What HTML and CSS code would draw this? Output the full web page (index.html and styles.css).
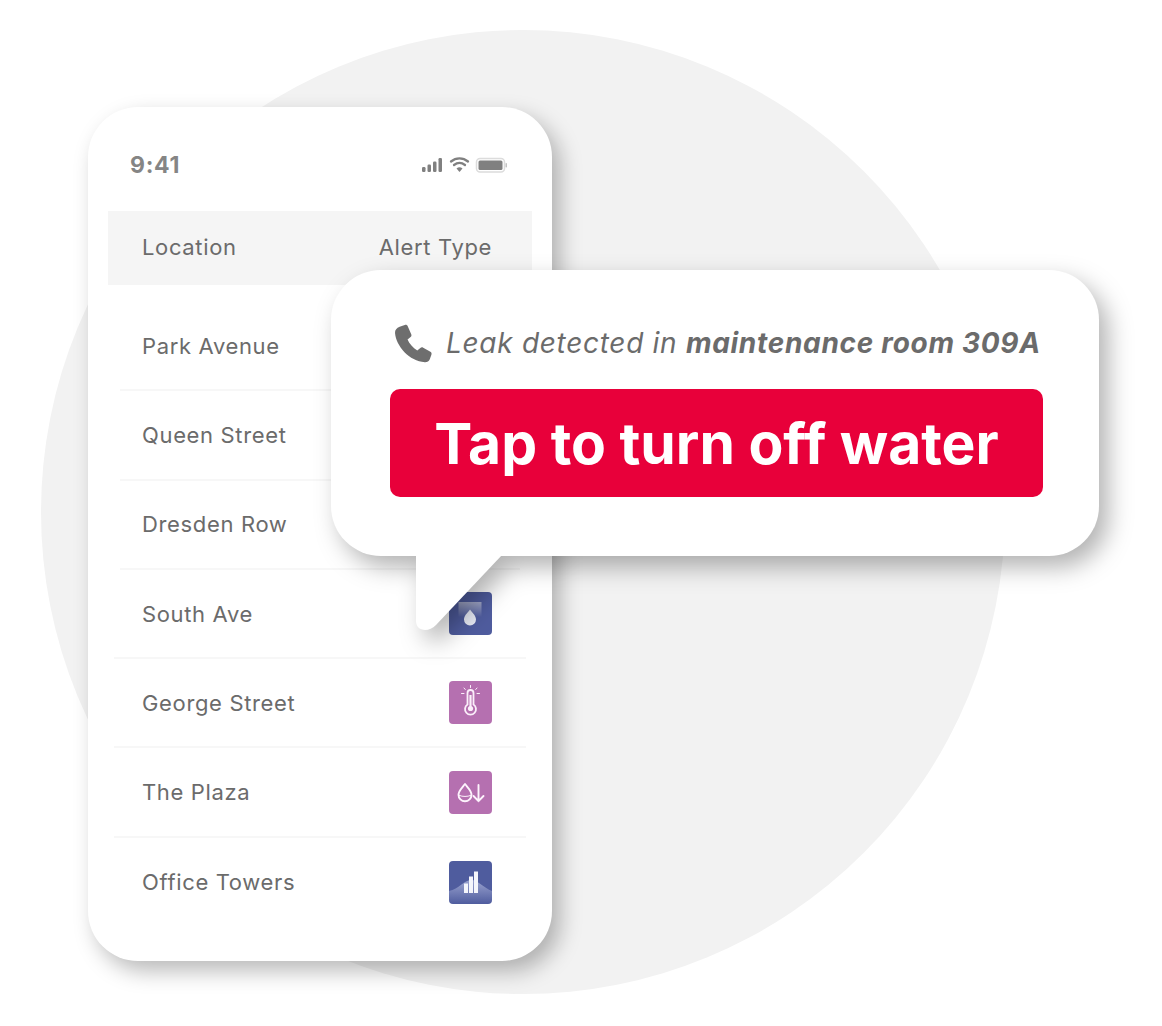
FILE: index.html
```html
<!DOCTYPE html>
<html lang="en">
<head>
    <meta charset="UTF-8">
    <meta name="viewport" content="width=device-width, initial-scale=1.0">
    <title>Leak alert</title>
    <link rel="stylesheet" href="styles.css">
</head>
<body>
    <div class="stage">
        <div class="backdrop"></div>

        <div class="phone">
            <div class="status-bar">
                <span class="time">9:41</span>
                <svg class="status-icons" width="88" height="20" viewBox="0 0 88 20">
                    <rect x="2" y="12" width="3.500" height="5" rx="1.200" fill="#808080"/>
                    <rect x="7.500" y="9.500" width="3.500" height="7.500" rx="1.200" fill="#808080"/>
                    <rect x="13" y="6.500" width="3.500" height="10.500" rx="1.200" fill="#808080"/>
                    <rect x="18.500" y="3" width="3.500" height="14" rx="1.200" fill="#808080"/>
                    <path d="M31 6.500c5-4.200 12-4.200 17 0M34 10c3.400-2.700 7.600-2.700 11 0" fill="none" stroke="#808080" stroke-width="2.300" stroke-linecap="round"/>
                    <path d="M36.500 13.500c2-1.600 4-1.600 6 0L39.500 17z" fill="#808080"/>
                    <rect x="56.500" y="3.500" width="28" height="13.500" rx="3.500" fill="none" stroke="#dcdcdc" stroke-width="1.500"/>
                    <rect x="58.500" y="5.500" width="24" height="9.500" rx="1.500" fill="#808080"/>
                    <rect x="85.500" y="8" width="1.500" height="4.500" rx=".7" fill="#c4c4c4"/>
                </svg>
            </div>

            <div class="table-head">
                <span>Location</span>
                <span>Alert Type</span>
            </div>

            <div class="row row-inset"><span>Park Avenue</span></div>
            <div class="row row-inset"><span>Queen Street</span></div>
            <div class="row row-inset"><span>Dresden Row</span></div>
            <div class="row">
                <span>South Ave</span>
                <div class="alert-icon alert-blue">
                    <svg width="43" height="43" viewBox="0 0 43 43">
                        <defs>
                            <linearGradient id="valve" x1="0" y1="0" x2="0" y2="1">
                                <stop offset="0" stop-color="#a3a9c9"/>
                                <stop offset="1" stop-color="#a3a9c9" stop-opacity="0"/>
                            </linearGradient>
                        </defs>
                        <rect x="9.500" y="10" width="23" height="15" fill="url(#valve)"/>
                        <path d="M21 17.500c3 3.800 6 6.500 6 10a6 6 0 0 1-12 0c0-3.500 3-6.200 6-10z" fill="#e6e9f4"/>
                    </svg>
                </div>
            </div>
            <div class="row">
                <span>George Street</span>
                <div class="alert-icon alert-purple">
                    <svg width="43" height="43" viewBox="0 0 43 43" fill="none" stroke="#fbeffa">
                        <path d="M18.500 12a3 3 0 0 1 6 0v11.500a5.500 5.500 0 1 1-6 0z" stroke-width="1.800"/>
                        <circle cx="21.500" cy="27.500" r="2.600" fill="#fbeffa" stroke="none"/>
                        <path d="M21.500 14v12" stroke-width="2.200"/>
                        <path d="M21.500 4.500v2M15 7l1.300 1.500M28 7l-1.300 1.500M12.500 12.500h2.500M28 12.500h2.500" stroke-width="1" stroke-linecap="round"/>
                    </svg>
                </div>
            </div>
            <div class="row">
                <span>The Plaza</span>
                <div class="alert-icon alert-purple">
                    <svg width="43" height="43" viewBox="0 0 43 43" fill="none" stroke="#fdf3fc" stroke-width="1.900" stroke-linecap="round" stroke-linejoin="round">
                        <path d="M16 13c2.800 3.700 6.500 6.800 6.500 10.800a6.500 6.500 0 0 1-13 0c0-4 3.700-7.100 6.500-10.800z"/>
                        <path d="M10.500 24.500c3 1.300 8 1.300 11 0" stroke-width="1"/>
                        <path d="M29.500 14v16M24.500 25l5 5.200 5-5.200"/>
                    </svg>
                </div>
            </div>
            <div class="row">
                <span>Office Towers</span>
                <div class="alert-icon alert-blue">
                    <svg width="43" height="43" viewBox="0 0 43 43">
                        <defs>
                            <linearGradient id="hill" x1="0" y1="0" x2="0" y2="1">
                                <stop offset="0" stop-color="#9aa3cf"/>
                                <stop offset="1" stop-color="#9aa3cf" stop-opacity="0"/>
                            </linearGradient>
                        </defs>
                        <path d="M0 30c10-2 15-11 22-11s13 8 21 11v13H0z" fill="url(#hill)"/>
                        <rect x="15" y="22.500" width="4" height="9.500" fill="#f4f5fb"/>
                        <rect x="20" y="15.500" width="4" height="16.500" fill="#f4f5fb"/>
                        <rect x="25" y="10.500" width="4" height="21.500" fill="#f4f5fb"/>
                    </svg>
                </div>
            </div>
        </div>

        <div class="bubble">
            <div class="bubble-body">
                <p class="message">
                    <svg class="phone-icon" width="40" height="40" viewBox="0 0 40 40">
                        <path d="M5.500 2.800 10.500 1c1.300-.5 2.400 0 2.900 1.300l3.400 7.600c.5 1.100.2 2-.6 2.700l-3 2.500c1.900 4.300 5.200 8 9.500 10.700l3-2.500c.9-.7 1.800-.8 2.800-.2l7 4c1.100.7 1.400 1.700 1 2.900l-1.600 4.300c-.7 1.900-2.600 3.100-4.800 3C15 36.400 2 21.500 1 8.800.9 6 2.600 3.800 5.500 2.800z" fill="#6e6e6e"/>
                    </svg>
                    <span>Leak detected in <b>maintenance room 309A</b></span>
                </p>
                <div class="cta">Tap to turn off water</div>
            </div>
            <svg class="bubble-tail" width="90" height="78" viewBox="0 0 90 78">
                <path d="M4 0H90L24 70C16 78 4 76 4 66Z" fill="#fff"/>
            </svg>
        </div>
    </div>
</body>
</html>
```

FILE: styles.css
```css
* {
    box-sizing: border-box;
}
body {
    margin: 0;
    background: #fff;
    font-family: 'Inter', 'Liberation Sans', sans-serif;
    color: #6b6b6b;
}
.stage {
    position: relative;
    width: 1162px;
    height: 1026px;
    padding: 107px 0 0 88px;
    overflow: hidden;
}
.backdrop {
    position: absolute;
    left: 41px;
    top: 30px;
    width: 964px;
    height: 964px;
    border-radius: 50%;
    background: #f2f2f2;
}

.phone {
    position: relative;
    width: 464px;
    height: 854px;
    padding: 0 20px;
    background: #fff;
    border-radius: 50px;
    box-shadow: 8px 10px 22px rgba(0,0,0,0.28);
}
.status-bar {
    height: 104px;
    padding: 12px 24px 0 22px;
    display: flex;
    justify-content: space-between;
    align-items: center;
}
.time {
    font-size: 23px;
    font-weight: 700;
    color: #858585;
    letter-spacing: 0.7px;
}
.table-head {
    height: 74px;
    padding: 0 40px 0 34px;
    display: flex;
    justify-content: space-between;
    align-items: center;
    background: #f5f5f5;
    font-size: 22px;
    letter-spacing: 0.65px;
}
.table-head span {
    margin-top: -2px;
}
.row {
    height: 89.3px;
    display: flex;
    justify-content: space-between;
    align-items: center;
    font-size: 22px;
    letter-spacing: 0.65px;
    border-bottom: 2px solid #f7f7f7;
    margin: 0 6px;
    padding-left: 28px;
    padding-right: 34px;
}
.table-head + .row {
    margin-top: 17px;
}
.row-inset {
    margin: 0 12px;
    padding-left: 22px;
}
.row:last-child {
    border-bottom: 0;
}
.alert-icon {
    width: 43px;
    height: 43px;
    border-radius: 4px;
    overflow: hidden;
    display: flex;
}
.alert-blue {
    background: #4f5c9e;
}
.alert-purple {
    background: #b570b0;
}

.bubble {
    position: absolute;
    left: 331px;
    top: 270px;
    width: 768px;
    filter: drop-shadow(9px 11px 12px rgba(0,0,0,0.3));
}
.bubble-body {
    height: 286px;
    padding: 51px 56px 0 59px;
    background: #fff;
    border-radius: 50px;
}
.message {
    margin: 0 0 24px;
    height: 44px;
    padding-left: 4px;
    display: flex;
    align-items: center;
    gap: 11px;
    font-size: 28px;
    font-style: italic;
    letter-spacing: 0.7px;
    white-space: nowrap;
}
.phone-icon {
    flex: none;
    width: 41px;
    height: 41px;
    margin-top: 2px;
}
.message b {
    font-weight: 700;
}
.cta {
    height: 108px;
    display: flex;
    align-items: center;
    justify-content: center;
    background: #e8003a;
    border-radius: 10px;
    color: #fff;
    font-size: 57px;
    font-weight: 700;
    white-space: nowrap;
}
.bubble-tail {
    position: absolute;
    left: 81px;
    top: 285px;
    display: block;
}
```
